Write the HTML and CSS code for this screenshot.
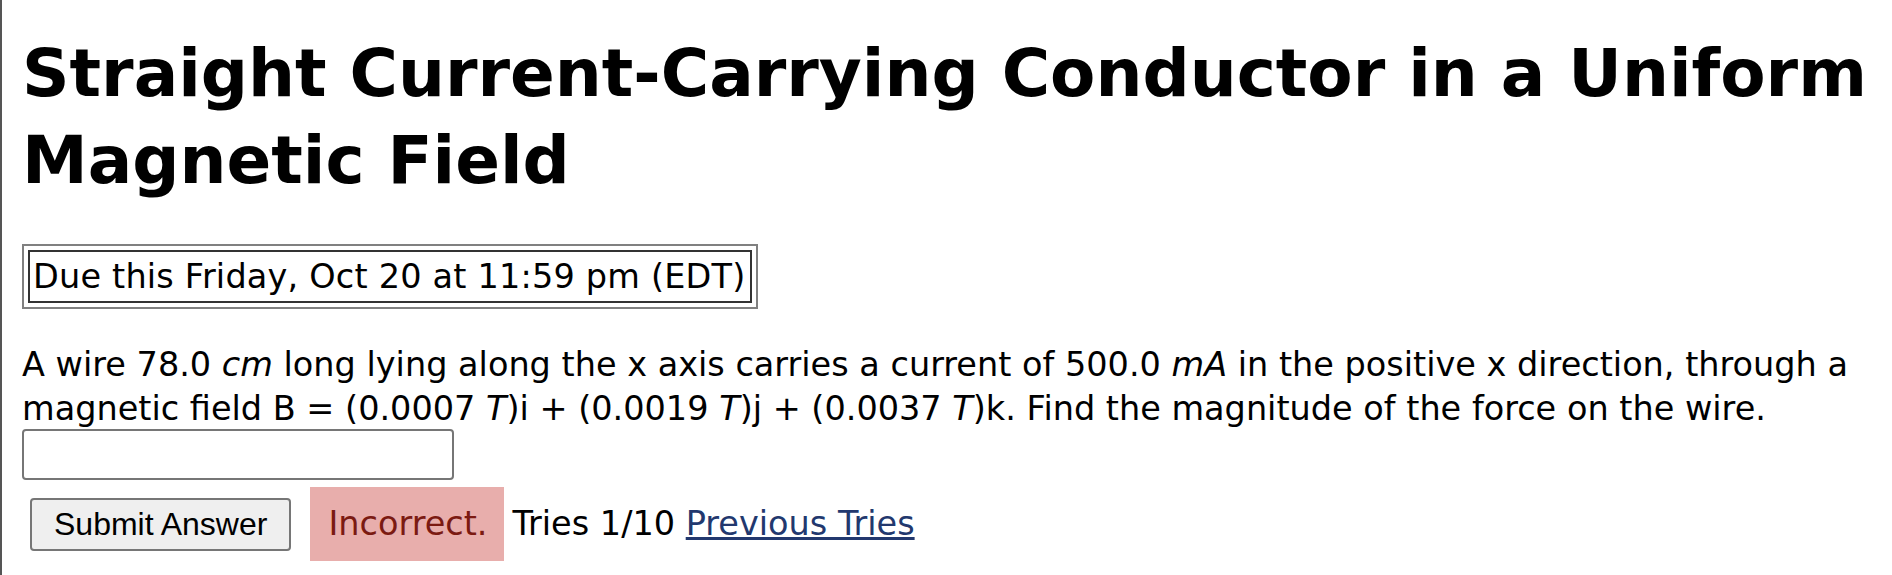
FILE: index.html
```html
<!DOCTYPE html>
<html>
<head>
<meta charset="utf-8">
<title>Straight Current-Carrying Conductor in a Uniform Magnetic Field</title>
<link rel="stylesheet" href="styles.css">
</head>
<body>
<div class="page">
  <h1 class="title">Straight Current-Carrying Conductor in a Uniform Magnetic Field</h1>
  <div class="due-outer">
    <div class="due-inner">Due this Friday, Oct 20 at 11:59 pm (EDT)</div>
  </div>
  <p class="question">A wire 78.0 <i>cm</i> long lying along the x axis carries a current of 500.0 <i>mA</i> in the positive x direction, through a magnetic field B = (0.0007 <i>T</i>)i + (0.0019 <i>T</i>)j + (0.0037 <i>T</i>)k. Find the magnitude of the force on the wire.</p>
  <input class="answer" type="text">
  <div class="submit-row">
    <button class="submit" type="button">Submit Answer</button>
    <span class="incorrect">Incorrect.</span>
    <span class="tries">Tries 1/10 <a class="prev" href="#">Previous Tries</a></span>
  </div>
</div>
</body>
</html>
```

FILE: styles.css
```css
html, body {
  margin: 0;
  padding: 0;
  background: #ffffff;
}

.page {
  height: 575px;
  overflow: hidden;
  box-sizing: border-box;
  border-left: 2px solid #555555;
  padding: 0 0 0 20px;
  font-family: "DejaVu Sans", Verdana, sans-serif;
  font-size: 33.5px;
  line-height: 44px;
  color: #000000;
}

.title {
  margin: 30px 0 0 0;
  font-family: "DejaVu Sans", Verdana, sans-serif;
  font-weight: bold;
  font-size: 66px;
  line-height: 87px;
}

.due-outer {
  display: inline-block;
  margin-top: 40px;
  border: 2px solid #808080;
  padding: 4px;
}

.due-inner {
  border: 2px solid #333333;
  padding: 2px 4px 2px 3px;
  line-height: 45px;
  letter-spacing: 0.2px;
}

.question {
  margin: 34px 0 0 0;
}

.answer {
  display: block;
  box-sizing: border-box;
  width: 432px;
  height: 51px;
  margin: -2px 0 0 0;
  border: 2px solid #767676;
  border-radius: 4px;
  background: #ffffff;
  font-size: 30px;
}

.submit-row {
  display: flex;
  align-items: center;
  margin-top: 7px;
}

.submit {
  box-sizing: border-box;
  height: 53px;
  margin-left: 8px;
  padding: 0 22px;
  border: 2px solid #767676;
  border-radius: 4px;
  background: #efefef;
  color: #000000;
  font-family: "Liberation Sans", Arial, sans-serif;
  font-size: 32px;
  line-height: 39px;
}

.incorrect {
  margin-left: 19px;
  padding: 15px 17px 15px 18px;
  background: #e8aeac;
  color: #7b1a12;
}

.tries {
  margin-left: 8px;
}

.prev {
  color: #22386e;
  text-decoration: underline;
}
```
